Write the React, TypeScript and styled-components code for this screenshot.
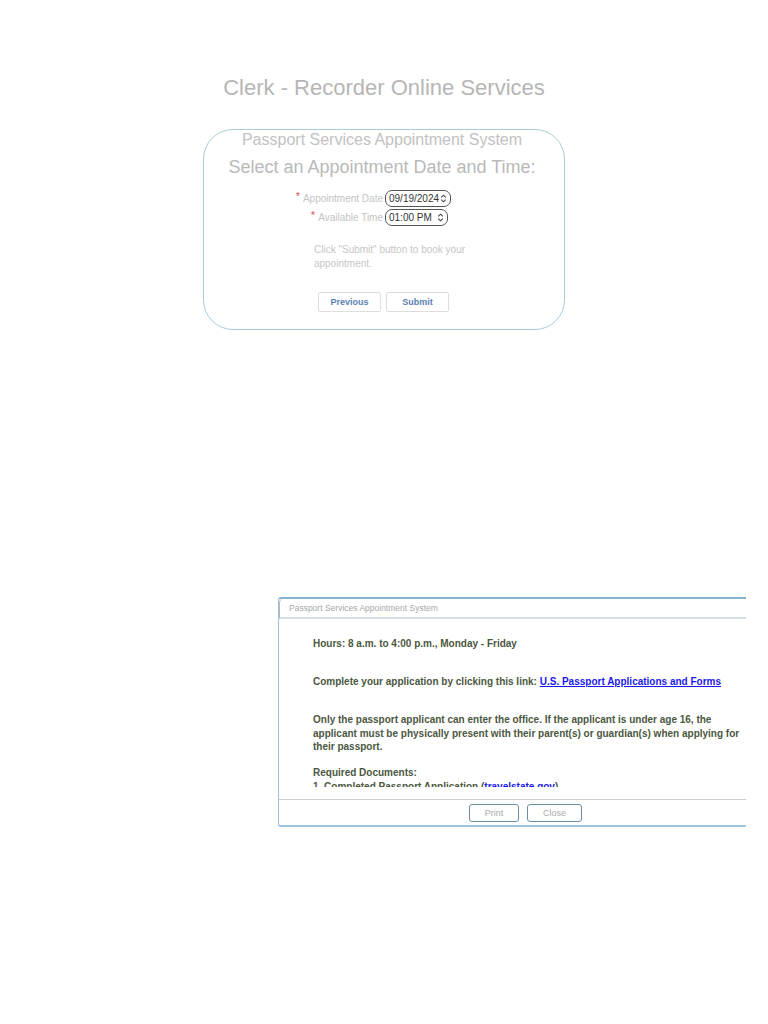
import React from "react";
import styled, { createGlobalStyle } from "styled-components";

const Global = createGlobalStyle`
  html, body { margin: 0; padding: 0; background: #ffffff; }
  body { font-family: "Liberation Sans", Arial, sans-serif; }
  * { box-sizing: border-box; }
`;

const Page = styled.div`
  width: 768px;
  height: 1024px;
  padding-top: 75px;
  overflow: hidden;
`;

const SiteTitle = styled.h1`
  margin: 0;
  text-align: center;
  font-weight: normal;
  font-size: 22px;
  line-height: 26px;
  color: #b6b6b6;
`;

const Card = styled.section`
  margin: 28px 0 0 203px;
  width: 362px;
  height: 201px;
  border: 1px solid #a9cbe0;
  border-radius: 30px;
`;

const CardTitle = styled.div`
  text-align: center;
  font-size: 16px;
  line-height: 20px;
  color: #c2c2c2;
  padding-right: 4px;
`;

const CardHeading = styled.div`
  text-align: center;
  font-size: 18px;
  line-height: 22px;
  margin-top: 6px;
  color: #b9b9b9;
  padding-right: 4px;
`;

const FormGrid = styled.div`
  display: grid;
  grid-template-columns: 179px auto;
  column-gap: 2px;
  row-gap: 2px;
  margin-top: 12px;
  align-items: center;
`;

const Label = styled.label`
  text-align: right;
  font-size: 10px;
  line-height: 17px;
  color: #c4c4c4;
  white-space: nowrap;
`;

const Star = styled.span`
  color: #d9534f;
  font-size: 11px;
  margin-right: 3px;
  position: relative;
  top: -2px;
`;

const SelectBox = styled.div<{ $w: number }>`
  width: ${(p) => p.$w}px;
  height: 17px;
  border: 1px solid #555;
  border-radius: 7px;
  display: flex;
  align-items: center;
  justify-content: space-between;
  padding: 0 3px 0 3px;
  font-size: 10px;
  color: #333;
`;

const Hint = styled.p`
  margin: 17px 0 0 110px;
  width: 165px;
  font-size: 10px;
  line-height: 14px;
  color: #c6c6c6;
`;

const ButtonRow = styled.div`
  display: flex;
  gap: 5px;
  margin: 21px 0 0 114px;
`;

const FormButton = styled.button`
  width: 63px;
  height: 20px;
  background: #fff;
  border: 1px solid #dedede;
  border-radius: 2px;
  font-family: "Liberation Sans", Arial, sans-serif;
  font-size: 9px;
  font-weight: bold;
  color: #5a82b4;
  padding: 0;
`;

const Dialog = styled.section`
  margin: 267px 0 0 278px;
  width: 468px;
  border-top: 2px solid #85b3cc;
  border-left: 1px solid #9cc5da;
  border-bottom: 2px solid #9cc5da;
  border-top-left-radius: 3px;
  border-bottom-left-radius: 3px;
`;

const DialogHeader = styled.div`
  height: 20px;
  border-bottom: 2px solid #d3dee6;
  border-left: 1px solid #b8b8b8;
  border-top-left-radius: 4px;
  padding-left: 9px;
  display: flex;
  align-items: center;
  font-size: 8.5px;
  color: #a8a8a8;
`;

const DialogBody = styled.div`
  padding: 18px 0 12px 34px;
  border-bottom: 1px solid #cfcfcf;
`;

const ScrollArea = styled.div`
  height: 150px;
  overflow: hidden;
`;

const Para = styled.p<{ $gap: number }>`
  margin: 0 0 ${(p) => p.$gap}px;
  width: 436px;
  font-size: 10px;
  font-weight: bold;
  line-height: 13.5px;
  color: #4b5741;
`;

const Link = styled.a`
  color: #1a1aee;
  text-decoration: underline;
`;

const PlainLink = styled.a`
  color: #1a1aee;
  text-decoration: none;
`;

const DialogFooter = styled.div`
  height: 25px;
  display: flex;
  justify-content: center;
  align-items: center;
  gap: 8px;
  padding-left: 26px;
`;

const FooterButton = styled.button<{ $w: number }>`
  width: ${(p) => p.$w}px;
  height: 18px;
  background: #fff;
  border: 1px solid #6e8ea6;
  border-radius: 3px;
  font-family: "Liberation Sans", Arial, sans-serif;
  font-size: 9px;
  color: #ababab;
  padding: 0;
`;

const Updown = () => (
  <svg width="7" height="9" viewBox="0 0 7 9" fill="none" stroke="#444" strokeWidth="1.1">
    <path d="M1.2 3.4 L3.5 1.2 L5.8 3.4" />
    <path d="M1.2 5.6 L3.5 7.8 L5.8 5.6" />
  </svg>
);

export default function App() {
  return (
    <Page>
      <Global />
      <SiteTitle>Clerk - Recorder Online Services</SiteTitle>
      <Card>
        <CardTitle>Passport Services Appointment System</CardTitle>
        <CardHeading>Select an Appointment Date and Time:</CardHeading>
        <FormGrid>
          <Label>
            <Star>*</Star>Appointment Date
          </Label>
          <SelectBox $w={66}>
            <span>09/19/2024</span>
            <Updown />
          </SelectBox>
          <Label>
            <Star>*</Star>Available Time
          </Label>
          <SelectBox $w={63}>
            <span>01:00 PM</span>
            <Updown />
          </SelectBox>
        </FormGrid>
        <Hint>Click "Submit" button to book your appointment.</Hint>
        <ButtonRow>
          <FormButton>Previous</FormButton>
          <FormButton>Submit</FormButton>
        </ButtonRow>
      </Card>
      <Dialog>
        <DialogHeader>Passport Services Appointment System</DialogHeader>
        <DialogBody>
          <ScrollArea>
            <Para $gap={24.5}>Hours: 8 a.m. to 4:00 p.m., Monday - Friday</Para>
            <Para $gap={24.5}>
              Complete your application by clicking this link:{" "}
              <Link href="#">U.S. Passport Applications and Forms</Link>
            </Para>
            <Para $gap={12.5}>
              Only the passport applicant can enter the office. If the applicant is under age 16, the
              applicant must be physically present with their parent(s) or guardian(s) when applying for
              their passport.
            </Para>
            <Para $gap={0}>
              Required Documents:
              <br />
              1. Completed Passport Application (<PlainLink href="#">travelstate.gov</PlainLink>)
            </Para>
          </ScrollArea>
        </DialogBody>
        <DialogFooter>
          <FooterButton $w={50}>Print</FooterButton>
          <FooterButton $w={55}>Close</FooterButton>
        </DialogFooter>
      </Dialog>
    </Page>
  );
}
